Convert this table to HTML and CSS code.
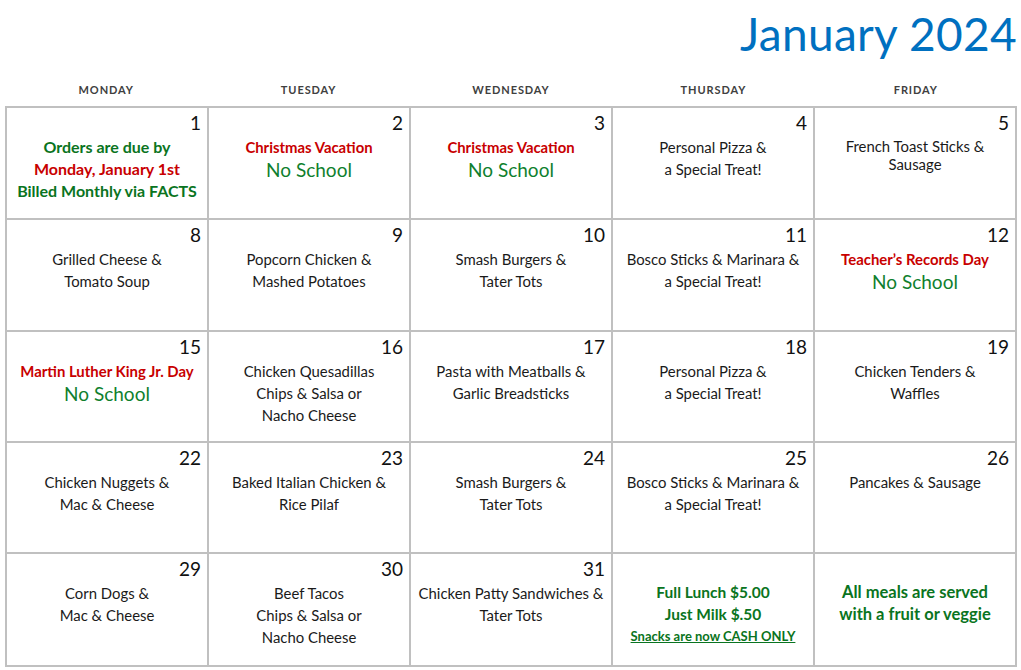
FILE: index.html
```html
<!DOCTYPE html>
<html>
<head>
<meta charset="utf-8">
<link rel="stylesheet" href="styles.css">
</head>
<body>
<div class="page">
  <h1 class="title">January 2024</h1>
  <div class="days">
    <div>MONDAY</div><div>TUESDAY</div><div>WEDNESDAY</div><div>THURSDAY</div><div>FRIDAY</div>
  </div>
  <div class="cal">
    <div class="cell"><div class="num">1</div><div class="txt bold big"><span class="green">Orders are due by</span><br><span class="red">Monday, January 1st</span><br><span class="green">Billed Monthly via FACTS</span></div></div>
    <div class="cell"><div class="num">2</div><div class="txt"><span class="red bold">Christmas Vacation</span><div class="ns">No School</div></div></div>
    <div class="cell"><div class="num">3</div><div class="txt"><span class="red bold">Christmas Vacation</span><div class="ns">No School</div></div></div>
    <div class="cell"><div class="num">4</div><div class="txt">Personal Pizza &amp;<br>a Special Treat!</div></div>
    <div class="cell"><div class="num">5</div><div class="txt tight">French Toast Sticks &amp;<br>Sausage</div></div>

    <div class="cell"><div class="num">8</div><div class="txt">Grilled Cheese &amp;<br>Tomato Soup</div></div>
    <div class="cell"><div class="num">9</div><div class="txt">Popcorn Chicken &amp;<br>Mashed Potatoes</div></div>
    <div class="cell"><div class="num">10</div><div class="txt">Smash Burgers &amp;<br>Tater Tots</div></div>
    <div class="cell"><div class="num">11</div><div class="txt">Bosco Sticks &amp; Marinara &amp;<br>a Special Treat!</div></div>
    <div class="cell"><div class="num">12</div><div class="txt"><span class="red bold">Teacher’s Records Day</span><div class="ns">No School</div></div></div>

    <div class="cell"><div class="num">15</div><div class="txt"><span class="red bold">Martin Luther King Jr. Day</span><div class="ns">No School</div></div></div>
    <div class="cell"><div class="num">16</div><div class="txt">Chicken Quesadillas<br>Chips &amp; Salsa or<br>Nacho Cheese</div></div>
    <div class="cell"><div class="num">17</div><div class="txt">Pasta with Meatballs &amp;<br>Garlic Breadsticks</div></div>
    <div class="cell"><div class="num">18</div><div class="txt">Personal Pizza &amp;<br>a Special Treat!</div></div>
    <div class="cell"><div class="num">19</div><div class="txt">Chicken Tenders &amp;<br>Waffles</div></div>

    <div class="cell"><div class="num">22</div><div class="txt">Chicken Nuggets &amp;<br>Mac &amp; Cheese</div></div>
    <div class="cell"><div class="num">23</div><div class="txt">Baked Italian Chicken &amp;<br>Rice Pilaf</div></div>
    <div class="cell"><div class="num">24</div><div class="txt">Smash Burgers &amp;<br>Tater Tots</div></div>
    <div class="cell"><div class="num">25</div><div class="txt">Bosco Sticks &amp; Marinara &amp;<br>a Special Treat!</div></div>
    <div class="cell"><div class="num">26</div><div class="txt">Pancakes &amp; Sausage</div></div>

    <div class="cell"><div class="num">29</div><div class="txt">Corn Dogs &amp;<br>Mac &amp; Cheese</div></div>
    <div class="cell"><div class="num">30</div><div class="txt">Beef Tacos<br>Chips &amp; Salsa or<br>Nacho Cheese</div></div>
    <div class="cell"><div class="num">31</div><div class="txt">Chicken Patty Sandwiches &amp;<br>Tater Tots</div></div>
    <div class="cell"><div class="num"></div><div class="txt note green bold">Full Lunch $5.00<br>Just Milk $.50<div class="cash">Snacks are now CASH ONLY</div></div></div>
    <div class="cell"><div class="num"></div><div class="txt note meals green bold">All meals are served<br>with a fruit or veggie</div></div>
  </div>
</div>
</body>
</html>
```

FILE: styles.css
```css
* { box-sizing: border-box; }
html, body { margin: 0; padding: 0; background: #fff; }
body { font-family: "Lato", "Open Sans", sans-serif; color: #1a1a1a; }
.page { width: 1021px; padding: 0 4px 0 5px; }
.title {
  margin: 0;
  height: 74px;
  padding-top: 6px;
  text-align: right;
  font-weight: 400;
  font-size: 46px;
  line-height: 56px;
  color: #0070c0;
  letter-spacing: 0.3px;
}
.days {
  display: grid;
  grid-template-columns: repeat(5, 1fr);
  height: 32px;
  align-items: center;
  text-align: center;
  font-size: 11px;
  font-weight: 700;
  letter-spacing: 0.9px;
  color: #404040;
  padding-bottom: 2px;
}
.cal {
  display: grid;
  grid-template-columns: repeat(5, 1fr);
  grid-template-rows: 110px 110px 109px 109px 111px;
  gap: 2px;
  padding: 2px;
  background: #c0c0c0;
}
.cell {
  background: #fff;
  padding: 4px 6px 0 6px;
  text-align: center;
}
.num {
  text-align: right;
  font-size: 19px;
  line-height: 22px;
  height: 22px;
  color: #111;
}
.txt {
  font-size: 14.9px;
  line-height: 22px;
  margin-top: 2px;
}
.big { font-size: 16px; }
.tight { line-height: 18px; margin-top: 3px; }
.bold { font-weight: 700; }
.red { color: #c80000; }
.green { color: #0a7421; }
.ns {
  font-size: 19px;
  line-height: 24px;
  color: #0f7f2e;
}
.note { font-size: 15.5px; margin-top: 1px; }
.meals { font-size: 16.5px; }
.cash {
  font-size: 13px;
  line-height: 22px;
  text-decoration: underline;
}
```
